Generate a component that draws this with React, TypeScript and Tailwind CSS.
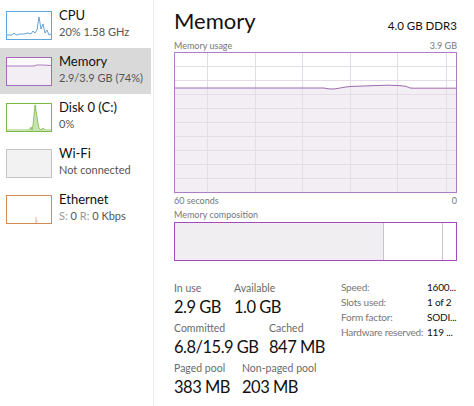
import React from 'react'

const font = { fontFamily: 'Lato, "Noto Sans", sans-serif' }

function Thumb({ kind }: { kind: 'cpu' | 'mem' | 'disk' | 'wifi' | 'eth' }) {
  if (kind === 'cpu') {
    return (
      <svg width="46" height="29" viewBox="0 0 46 29" className="block">
        <rect x="0.5" y="0.5" width="45" height="28" fill="#fff" stroke="#5ea6d9" />
        <polyline
          fill="none"
          stroke="#3c8ccc"
          strokeWidth="0.8"
          points="1,24 6,24 8,22 10,24 14,23 18,23 22,22 25,23 27,20 29,22 31,19 33,6 35,18 37,13 39,22 41,19 43,24 45,23"
        />
      </svg>
    )
  }
  if (kind === 'mem') {
    return (
      <svg width="46" height="29" viewBox="0 0 46 29" className="block">
        <rect x="0.5" y="0.5" width="45" height="28" fill="#f3eef4" stroke="#a66bb8" />
        <rect x="1" y="1" width="44" height="8" fill="#fbf9fb" />
        <polyline fill="none" stroke="#a66bb8" strokeWidth="0.9" points="1,9 28,9 31,8 36,8 45,8.5" />
      </svg>
    )
  }
  if (kind === 'disk') {
    return (
      <svg width="46" height="29" viewBox="0 0 46 29" className="block">
        <rect x="0.5" y="0.5" width="45" height="28" fill="#fff" stroke="#7bb945" />
        <line x1="30" y1="1" x2="30" y2="28" stroke="#cfe3bd" strokeWidth="0.6" />
        <polygon
          fill="#c6e2ae"
          points="1,28 22,28 24,26 25,24 26,27 27,22 28,12 29,2 30,8 31,14 32,20 33,25 35,27 37,25 39,28 45,28"
        />
        <polyline
          fill="none"
          stroke="#6fae3a"
          strokeWidth="0.7"
          points="1,27 22,27 24,26 25,24 26,27 27,22 28,12 29,2 30,8 31,14 32,20 33,25 35,27 37,25 39,27 45,27"
        />
      </svg>
    )
  }
  if (kind === 'wifi') {
    return (
      <svg width="46" height="29" viewBox="0 0 46 29" className="block">
        <rect x="0.5" y="0.5" width="45" height="28" fill="#f2f2f2" stroke="#c4c4c4" />
      </svg>
    )
  }
  return (
    <svg width="46" height="29" viewBox="0 0 46 29" className="block">
      <rect x="0.5" y="0.5" width="45" height="28" fill="#fff" stroke="#d08a55" />
      <line x1="30" y1="28" x2="30" y2="22" stroke="#d9a07a" strokeWidth="0.8" />
      <line x1="31" y1="28" x2="31" y2="25" stroke="#e7c1a6" strokeWidth="0.8" />
    </svg>
  )
}

function SideItem({
  kind,
  title,
  sub,
  selected,
}: {
  kind: 'cpu' | 'mem' | 'disk' | 'wifi' | 'eth'
  title: string
  sub: React.ReactNode
  selected?: boolean
}) {
  return (
    <div className={`flex items-center h-[46px] pl-[6px] ${selected ? 'bg-[#d9d9d9]' : ''}`}>
      <Thumb kind={kind} />
      <div className="ml-[7px] flex flex-col leading-none -mt-[4px]">
        <span className="text-[13px] text-[#111]">{title}</span>
        <span className="text-[11px] text-[#555] mt-[4px] whitespace-nowrap">{sub}</span>
      </div>
    </div>
  )
}

function UsageGraph() {
  const w = 283
  const h = 141
  const vx = [33.5, 81.5, 128.5, 176.5, 223.5, 272.5]
  const hy = [14.5, 28.5, 42.5, 56.5, 70.5, 84.5, 98.5, 112.5, 126.5]
  const line = '1,36 150,36 154,36.8 160,37 166,36 172,35 178,34.4 190,34 200,33.6 214,33.2 226,33.6 232,34.4 236,36 240,36.2 282,36.2'
  return (
    <svg width={w} height={h} viewBox={`0 0 ${w} ${h}`} className="block">
      <rect x="0" y="0" width={w} height={h} fill="#fff" />
      <polygon points={`${line} 282,140 1,140`} fill="#f2eef3" />
      {vx.map((x) => (
        <line key={x} x1={x} y1="1" x2={x} y2={h - 1} stroke="#e4dde7" strokeWidth="1" />
      ))}
      {hy.map((y) => (
        <line key={y} x1="1" y1={y} x2={w - 1} y2={y} stroke="#e4dde7" strokeWidth="1" />
      ))}
      <polyline points={line} fill="none" stroke="#9e6ab0" strokeWidth="1" />
      <rect x="0.5" y="0.5" width={w - 1} height={h - 1} fill="none" stroke="#b07cc4" strokeWidth="1" />
    </svg>
  )
}

function Stat({ label, value, className = '' }: { label: string; value: string; className?: string }) {
  return (
    <div className={`flex flex-col leading-none whitespace-nowrap ${className}`}>
      <span className="text-[10.5px] text-[#6b6b6b]">{label}</span>
      <span className="text-[16.5px] tracking-[-0.5px] text-[#111] mt-[5px]">{value}</span>
    </div>
  )
}

export default function App() {
  return (
    <div className="flex w-[474px] h-[406px] bg-white overflow-hidden" style={font}>
      {/* Sidebar */}
      <div className="w-[154px] shrink-0 pt-[2px] pr-[2px] border-r border-[#ececec]">
        <SideItem kind="cpu" title="CPU" sub="20%  1.58 GHz" />
        <SideItem kind="mem" title="Memory" sub="2.9/3.9 GB (74%)" selected />
        <SideItem kind="disk" title="Disk 0 (C:)" sub="0%" />
        <SideItem kind="wifi" title="Wi-Fi" sub="Not connected" />
        <SideItem
          kind="eth"
          title="Ethernet"
          sub={
            <>
              <span className="text-[#999]">S:</span> 0 <span className="text-[#999]">R:</span> 0 Kbps
            </>
          }
        />
      </div>

      {/* Main */}
      <div className="flex-1 pl-[20px] pr-[17px] pt-[10px]">
        <div className="flex items-end justify-between">
          <span className="text-[22px] text-[#111] leading-none">Memory</span>
          <span className="text-[11.5px] text-[#111] mb-[1px] leading-none">4.0 GB DDR3</span>
        </div>

        <div className="mt-[9px] flex justify-between text-[9px] text-[#777] leading-none">
          <span>Memory usage</span>
          <span>3.9 GB</span>
        </div>
        <div className="mt-[2px]">
          <UsageGraph />
        </div>
        <div className="mt-[3px] flex justify-between text-[9px] text-[#777] leading-none">
          <span>60 seconds</span>
          <span>0</span>
        </div>
        <div className="mt-[5px] text-[9px] text-[#777] leading-none">Memory composition</div>
        <div className="mt-[3px] flex h-[39px] w-[283px] border border-[#a34bbd]">
          <div className="w-[209px] bg-[#f0eef0] border-r border-[#cbbfd2]" />
          <div className="w-[59px] bg-white border-r border-[#cbbfd2]" />
          <div className="flex-1 bg-white" />
        </div>

        <div className="mt-[22px] flex items-start">
          <div className="w-[167px] shrink-0 flex flex-col gap-[8px]">
            <div className="flex">
              <Stat label="In use" value="2.9 GB" className="w-[60px]" />
              <Stat label="Available" value="1.0 GB" />
            </div>
            <div className="flex">
              <Stat label="Committed" value="6.8/15.9 GB" className="w-[95px]" />
              <Stat label="Cached" value="847 MB" />
            </div>
            <div className="flex">
              <Stat label="Paged pool" value="383 MB" className="w-[68px]" />
              <Stat label="Non-paged pool" value="203 MB" />
            </div>
          </div>
          <div className="grid grid-cols-[86px_auto] content-start text-[10px] tracking-[-0.2px] leading-[15px] -mt-[3px] whitespace-nowrap">
            <span className="text-[#777]">Speed:</span>
            <span className="text-[#111]">1600...</span>
            <span className="text-[#777]">Slots used:</span>
            <span className="text-[#111]">1 of 2</span>
            <span className="text-[#777]">Form factor:</span>
            <span className="text-[#111]">SODI...</span>
            <span className="text-[#777]">Hardware reserved:</span>
            <span className="text-[#111]">119 ...</span>
          </div>
        </div>
      </div>
    </div>
  )
}
